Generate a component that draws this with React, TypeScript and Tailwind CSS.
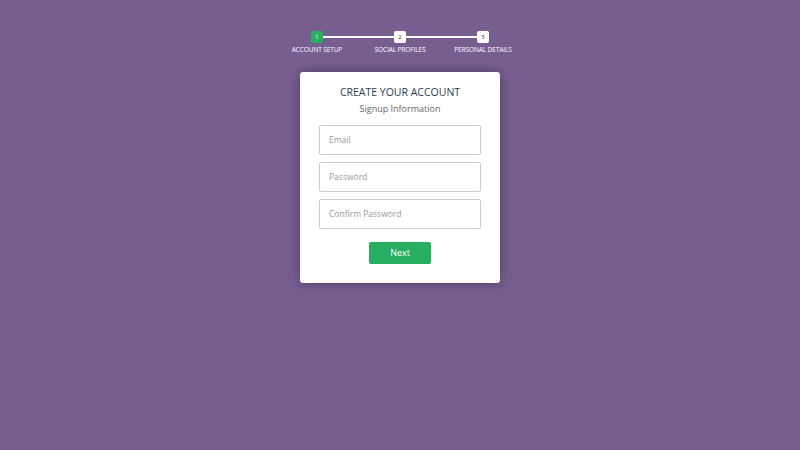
export default function App() {
  const steps = [
    { n: "1", label: "ACCOUNT SETUP", active: true },
    { n: "2", label: "SOCIAL PROFILES", active: false },
    { n: "3", label: "PERSONAL DETAILS", active: false },
  ]
  const font = { fontFamily: '"Open Sans", "Liberation Sans", sans-serif' }

  return (
    <div className="min-h-screen w-full bg-[#765e91] flex flex-col items-center pt-[31px]" style={font}>
      {/* progress bar */}
      <div className="relative flex w-[249px]">
        <div className="absolute left-[41px] right-[41px] top-[5px] h-[2px] bg-white" />
        {steps.map((s) => (
          <div key={s.n} className="relative flex w-[83px] flex-col items-center">
            <div
              className={
                s.active
                  ? "flex h-[12px] w-[12px] items-center justify-center rounded-[2px] bg-[#27ae60] text-[6px] text-white"
                  : "flex h-[12px] w-[12px] items-center justify-center rounded-[2px] bg-white text-[6px] text-[#333]"
              }
            >
              {s.n}
            </div>
            <div className="mt-[4px] whitespace-nowrap text-[6.5px] leading-none tracking-[-0.1px] text-white">
              {s.label}
            </div>
          </div>
        ))}
      </div>

      {/* card */}
      <div className="mt-[18px] flex w-[200px] flex-col items-center rounded-[3px] bg-white px-[19px] pt-[13px] pb-[19px] shadow-[0_0_12px_rgba(0,0,0,0.35)]">
        <h2 className="text-[10.5px] leading-[14px] text-[#2c3e50]">CREATE YOUR ACCOUNT</h2>
        <h3 className="mt-[4px] text-[9px] leading-[12px] text-[#666]">Signup Information</h3>
        <div className="mt-[10px] flex w-full flex-col gap-[7px]">
          {["Email", "Password", "Confirm Password"].map((p) => (
            <input
              key={p}
              placeholder={p}
              className="h-[30px] w-full rounded-[2px] border border-[#ccc] px-[9px] text-[8.5px] text-[#2c3e50] outline-none placeholder:text-[#999]"
              style={font}
            />
          ))}
        </div>
        <button
          className="mt-[13px] h-[22px] w-[62px] rounded-[2px] bg-[#27ae60] text-[9px] text-white"
          style={font}
        >
          Next
        </button>
      </div>
    </div>
  )
}
